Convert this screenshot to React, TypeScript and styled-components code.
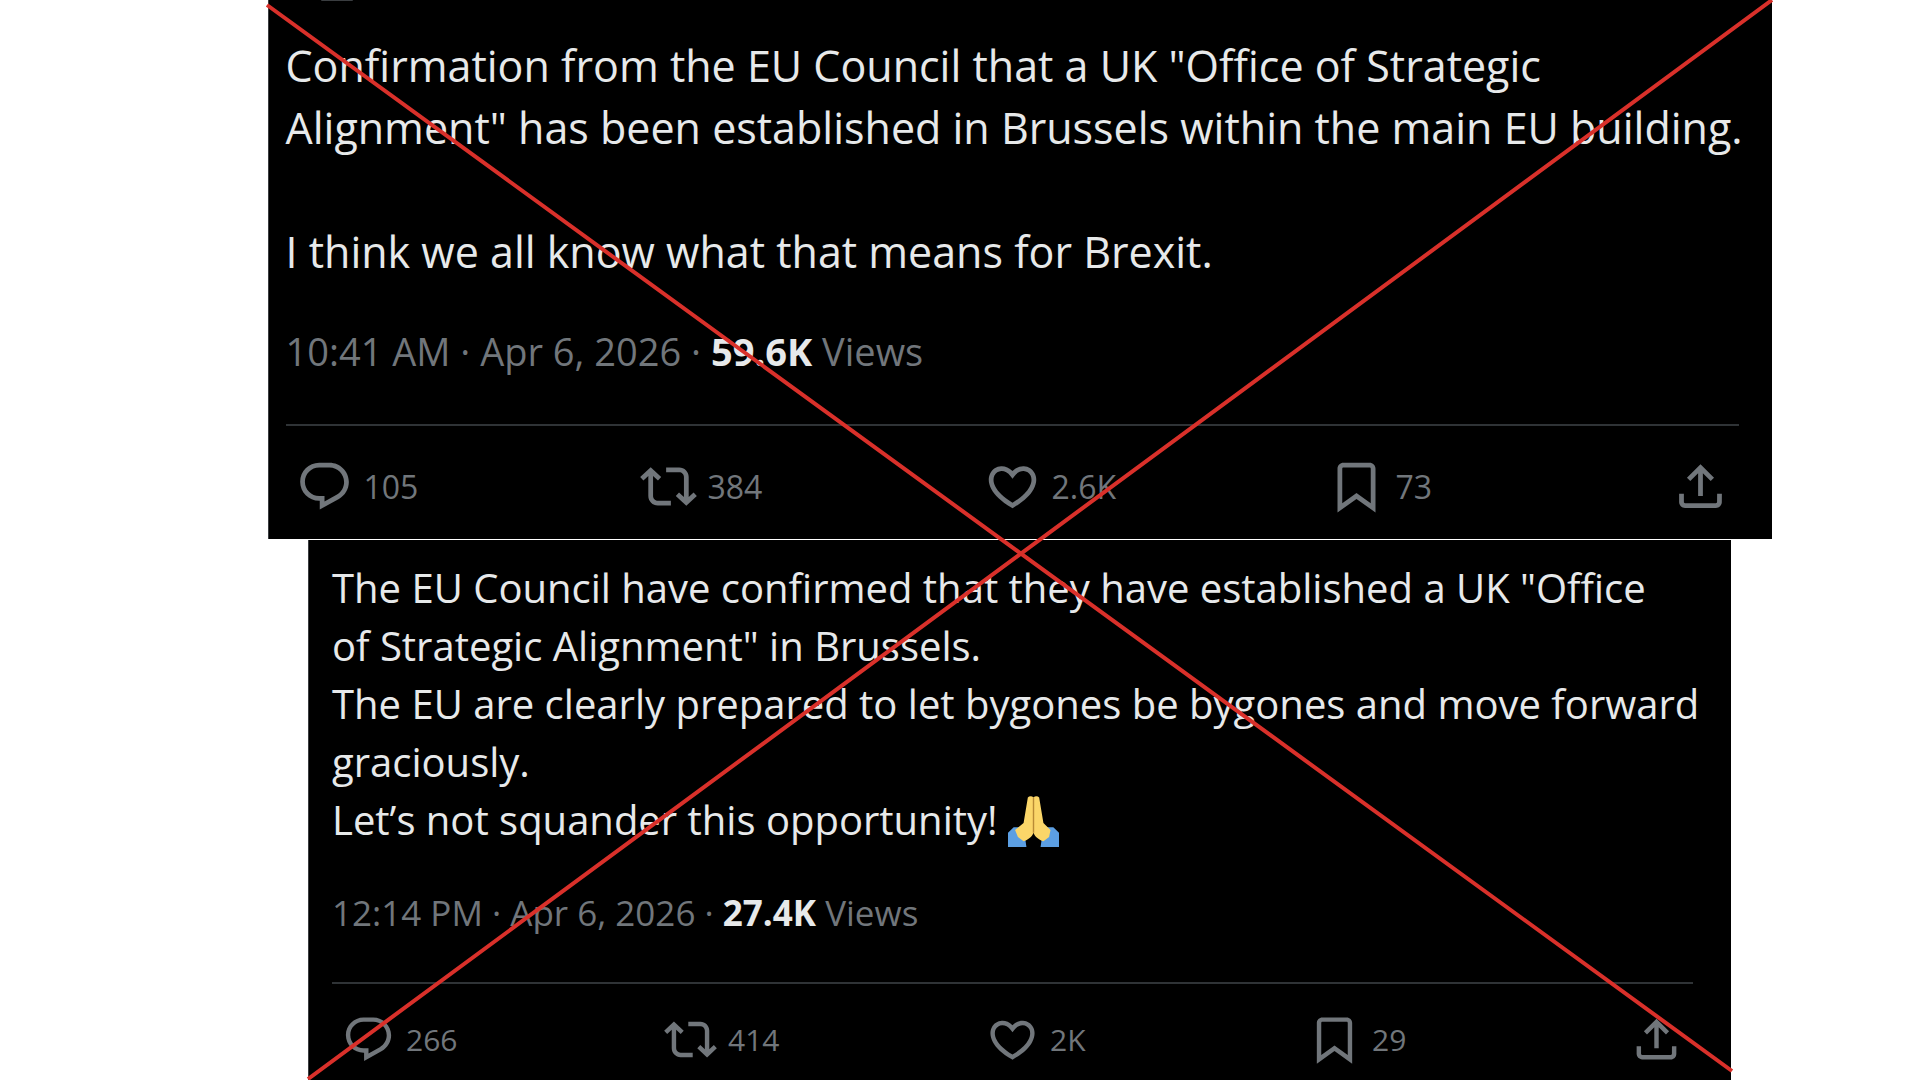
import React from 'react';
import styled, { createGlobalStyle } from 'styled-components';

const GlobalStyle = createGlobalStyle`
  *, *::before, *::after { box-sizing: border-box; }
  body { margin: 0; background: #fff; font-family: "Open Sans", "Liberation Sans", sans-serif; }
`;

type Size = 'large' | 'small';

const sizes = {
  large: { width: 1504, padding: '0 33px 24px 17px', top: 35, text: 43, line: 62, metaGap: 46, meta: 38, metaLine: 44, ruleGap: 51, rowGap: 32, icon: 57, count: 32 },
  small: { width: 1423, padding: '0 38px 14px 23px', top: 19, text: 40, line: 58, metaGap: 43, meta: 35, metaLine: 42, ruleGap: 48, rowGap: 29, icon: 53, count: 30 },
};

const Page = styled.main`
  position: relative;
  display: flex;
  flex-direction: column;
  align-items: center;
  gap: 1px;
  padding-left: 119px;
  overflow: hidden;
`;

const Card = styled.article<{ $size: Size }>`
  width: 100%;
  max-width: ${(p) => sizes[p.$size].width}px;
  padding: ${(p) => sizes[p.$size].padding};
  border-left: 1px solid #3a3d40;
  background: #000;
  color: #e7e9ea;
`;

const AvatarEdge = styled.div`
  width: 32px;
  height: 1px;
  margin: 0 0 -1px 35px;
  border-radius: 0 0 16px 16px;
  background: #3a3d40;
`;

const Message = styled.p<{ $size: Size }>`
  margin: 0 -24px 0 0;
  padding-top: ${(p) => sizes[p.$size].top}px;
  font-size: ${(p) => sizes[p.$size].text}px;
  line-height: ${(p) => sizes[p.$size].line}px;
`;

const Meta = styled.p<{ $size: Size }>`
  margin: ${(p) => sizes[p.$size].metaGap}px 0 ${(p) => sizes[p.$size].ruleGap}px;
  font-size: ${(p) => sizes[p.$size].meta}px;
  line-height: ${(p) => sizes[p.$size].metaLine}px;
  color: #71767b;
`;

const Views = styled.strong`
  font-weight: 700;
  color: #e7e9ea;
`;

const Actions = styled.div<{ $size: Size }>`
  display: grid;
  grid-template-columns: repeat(4, 1fr) auto;
  padding: ${(p) => sizes[p.$size].rowGap}px 10px 0;
  border-top: 2px solid #2f3336;
`;

const Action = styled.button<{ $size: Size }>`
  display: flex;
  align-items: center;
  gap: 11px;
  padding: 0;
  border: 0;
  background: none;
  color: #71767b;
  font-family: inherit;
  font-size: ${(p) => sizes[p.$size].count}px;
  line-height: ${(p) => sizes[p.$size].icon}px;
  cursor: pointer;

  svg {
    flex: none;
    width: ${(p) => sizes[p.$size].icon}px;
    height: ${(p) => sizes[p.$size].icon}px;
    fill: currentColor;
  }
`;

const Emoji = styled.svg`
  width: 51px;
  height: 51px;
  vertical-align: -12px;
`;

const Strike = styled.svg`
  position: absolute;
  inset: 0;
  width: 100%;
  height: 100%;
  pointer-events: none;
`;

const icons = {
  Reply: 'M1.751 10c0-4.42 3.584-8 8.005-8h4.366c4.49 0 8.129 3.64 8.129 8.13 0 2.96-1.607 5.68-4.196 7.11l-8.054 4.46v-3.69h-.067c-4.49.1-8.183-3.51-8.183-8.01zm8.005-6c-3.317 0-6.005 2.69-6.005 6 0 3.37 2.77 6.08 6.138 6.01l.351-.01h1.761v2.3l5.087-2.81c1.951-1.08 3.163-3.13 3.163-5.36 0-3.39-2.744-6.13-6.129-6.13H9.756z',
  Repost: 'M4.5 3.88l4.432 4.14-1.364 1.46L5.5 7.55V16c0 1.1.896 2 2 2H13v2H7.5c-2.209 0-4-1.79-4-4V7.55L1.432 9.48.068 8.02 4.5 3.88zM16.5 6H11V4h5.5c2.209 0 4 1.79 4 4v8.45l2.068-1.93 1.364 1.46-4.432 4.14-4.432-4.14 1.364-1.46 2.068 1.93V8c0-1.1-.896-2-2-2z',
  Like: 'M16.697 5.5c-1.222-.06-2.679.51-3.89 2.16l-.805 1.09-.806-1.09C9.984 6.01 8.526 5.44 7.304 5.5c-1.243.07-2.349.78-2.91 1.91-.552 1.12-.633 2.78.479 4.82 1.074 1.97 3.257 4.27 7.129 6.61 3.87-2.34 6.052-4.64 7.126-6.61 1.111-2.04 1.03-3.7.477-4.82-.561-1.13-1.666-1.84-2.908-1.91zm4.187 7.69c-1.351 2.48-4.001 5.12-8.379 7.67l-.503.3-.504-.3c-4.379-2.55-7.029-5.19-8.382-7.67-1.36-2.5-1.41-4.86-.514-6.67.887-1.79 2.647-2.91 4.601-3.01 1.651-.09 3.368.56 4.798 2.01 1.429-1.45 3.146-2.1 4.796-2.01 1.954.1 3.714 1.22 4.601 3.01.896 1.81.846 4.17-.514 6.67z',
  Bookmark: 'M4 4.5C4 3.12 5.119 2 6.5 2h11C18.881 2 20 3.12 20 4.5v18.44l-8-5.71-8 5.71V4.5zM6.5 4c-.276 0-.5.22-.5.5v14.56l6-4.29 6 4.29V4.5c0-.28-.224-.5-.5-.5h-11z',
  Share: 'M12 2.59l5.7 5.7-1.41 1.42L13 6.41V16h-2V6.41l-3.3 3.3-1.41-1.42L12 2.59zM21 15l-.02 3.51c0 1.38-1.12 2.49-2.5 2.49H5.5C4.11 21 3 19.88 3 18.5V15h2v3.5c0 .28.22.5.5.5h12.98c.28 0 .5-.22.5-.5L19 15h2z',
};

interface PostProps {
  size: Size;
  time: string;
  views: string;
  counts: [string, string, string, string];
  avatar?: boolean;
  children: React.ReactNode;
}

function Post({ size, time, views, counts, avatar, children }: PostProps) {
  return (
    <Card $size={size}>
      {avatar && <AvatarEdge />}
      <Message $size={size}>{children}</Message>
      <Meta $size={size}>
        {time} · <Views>{views}</Views> Views
      </Meta>
      <Actions $size={size}>
        {Object.entries(icons).map(([name, path], i) => (
          <Action key={name} $size={size} type="button" aria-label={name}>
            <svg viewBox="0 0 24 24" aria-hidden="true"><path d={path} /></svg>
            {counts[i] && <span>{counts[i]}</span>}
          </Action>
        ))}
      </Actions>
    </Card>
  );
}

function FoldedHands() {
  return (
    <Emoji viewBox="0 0 36 36" role="img" aria-label="Folded hands">
      <path fill="#5c9fe3" d="M0 36V26l4-4h7l2 14zM36 36V26l-4-4h-7l-2 14z" />
      <path fill="#fbd669" d="M14 1c1-1 3-1 4 0 1-1 3-1 4 0l3 18 5 5-1 5-4 3c-3-1-6-3-7-6-1 3-4 5-7 6l-4-3-2-5 6-5z" />
      <path stroke="#b98b36" strokeWidth="1" d="M18 1v25" />
    </Emoji>
  );
}

export default function App() {
  return (
    <>
      <GlobalStyle />
      <Page>
        <Post avatar size="large" time="10:41 AM · Apr 6, 2026" views="59.6K" counts={['105', '384', '2.6K', '73']}>
          Confirmation from the EU Council that a UK "Office of Strategic<br />
          Alignment" has been established in Brussels within the main EU building.<br />
          <br />
          I think we all know what that means for Brexit.
        </Post>
        <Post size="small" time="12:14 PM · Apr 6, 2026" views="27.4K" counts={['266', '414', '2K', '29']}>
          The EU Council have confirmed that they have established a UK "Office<br />
          of Strategic Alignment" in Brussels.<br />
          The EU are clearly prepared to let bygones be bygones and move forward<br />
          graciously.<br />
          Let’s not squander this opportunity! <FoldedHands />
        </Post>
        <Strike viewBox="0 0 1920 1080" preserveAspectRatio="none" aria-hidden="true">
          <path d="M267 5L1732 1071M1772 0L308 1079" stroke="#d9302a" strokeWidth="4" />
        </Strike>
      </Page>
    </>
  );
}
